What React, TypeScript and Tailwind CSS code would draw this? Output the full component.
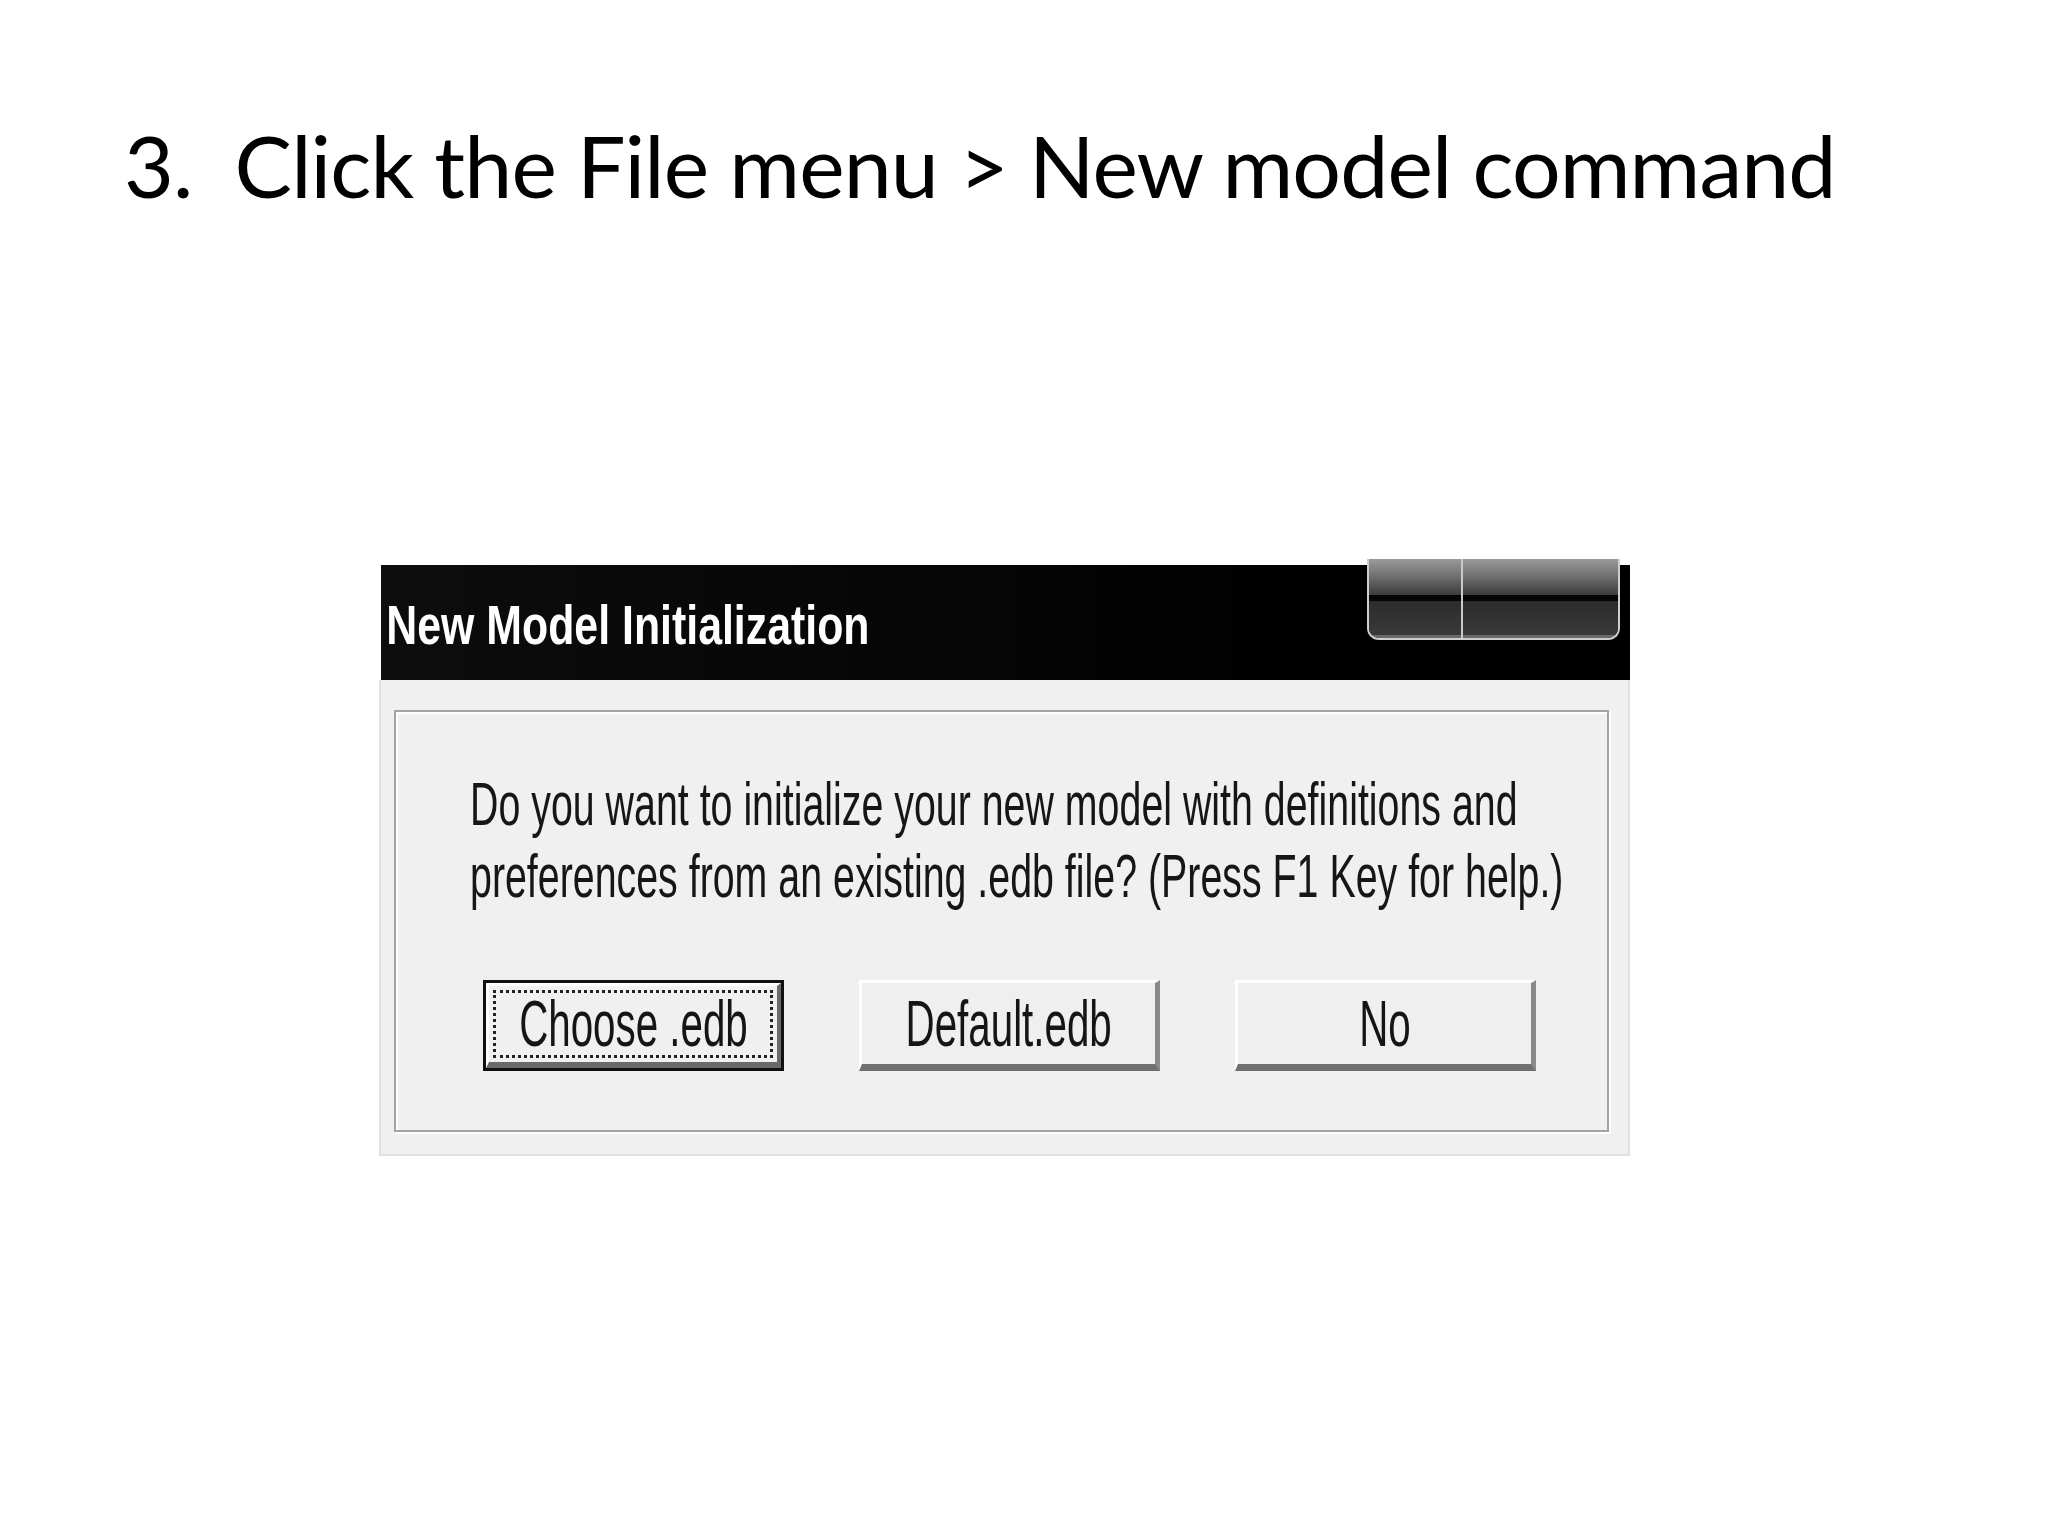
import React from "react";

function CapBtn({ w, border }: { w: string; border?: boolean }) {
  return (
    <div className={`${w} h-full flex flex-col ${border ? "border-r-2 border-[#c9c9c9]" : ""}`}>
      <div className="h-[36px] bg-gradient-to-b from-[#9a9a9a] via-[#6e6e6e] to-[#3c3c3c]" />
      <div className="h-[6px] bg-[#050505]" />
      <div className="flex-1 bg-gradient-to-b from-[#2c2c2c] to-[#3a3a3a] border-b-[3px] border-[#6a6a6a]" />
    </div>
  );
}

function CaptionButtons() {
  return (
    <div className="-mt-[6px] mr-[10px] flex self-start h-[81px] rounded-b-[12px] border-2 border-t-0 border-[#cfcfcf] overflow-hidden bg-black">
      <CapBtn w="w-[94px]" border />
      <CapBtn w="w-[155px]" />
    </div>
  );
}

function DlgButton({ label, isDefault }: { label: string; isDefault?: boolean }) {
  if (isDefault) {
    return (
      <div className="w-[301px] h-[91px] border-[3px] border-[#111] bg-[#f0f0f0]">
        <div className="w-full h-full border-t-[3px] border-l-[3px] border-t-white border-l-white border-b-[6px] border-r-[4px] border-b-[#6a6a6a] border-r-[#6a6a6a] p-[4px]">
          <div className="w-full h-full border-[3px] border-dotted border-[#222] flex items-center justify-center">
            <span className="inline-block scale-x-[0.63] whitespace-nowrap text-[64px] leading-none text-[#151515] font-['Liberation_Sans',Arial,sans-serif]">
              {label}
            </span>
          </div>
        </div>
      </div>
    );
  }
  return (
    <div className="w-[301px] h-[91px] border-t-[3px] border-l-[3px] border-t-white border-l-white border-b-[7px] border-r-[5px] border-b-[#707070] border-r-[#8a8a8a] bg-[#efefef] flex items-center justify-center">
      <span className="inline-block scale-x-[0.63] whitespace-nowrap text-[64px] leading-none text-[#151515] font-['Liberation_Sans',Arial,sans-serif]">
        {label}
      </span>
    </div>
  );
}

export default function App() {
  return (
    <div className="w-[2048px] h-[1536px] bg-white overflow-hidden flex flex-col">
      <h1 className="pl-[124px] pt-[122px] text-[86px] leading-none tracking-[-0.9px] text-black whitespace-pre font-['Lato',sans-serif] font-normal">
        {"3.  Click the File menu > New model command"}
      </h1>

      <div className="ml-[379px] mt-[357px] w-[1251px] flex flex-col">
        {/* Title bar */}
        <div className="h-[115px] ml-[2px] bg-gradient-to-r from-[#0d0d0d] via-[#050505] to-black flex items-center justify-between">
          <span className="pl-[7px] pt-[5px] inline-block origin-left scale-x-[0.765] whitespace-nowrap text-[56px] leading-none font-bold text-white font-['Liberation_Sans',Arial,sans-serif]">
            New Model Initialization
          </span>
          <CaptionButtons />
        </div>

        {/* Body */}
        <div className="h-[476px] bg-[#f0f0f0] border-2 border-t-0 border-[#e2e2e2] pl-[13px] pr-[19px] pt-[30px] pb-[22px] flex">
          <div className="flex-1 min-w-0 border-2 border-[#a3a3a3] shadow-[inset_2px_2px_0_#ffffff,2px_2px_0_#ffffff] pl-[74px] pt-[56px] flex flex-col">
            <div className="text-[61px] leading-[72px] text-[#161616] font-['Liberation_Sans',Arial,sans-serif]">
              <div className="origin-left scale-x-[0.645] whitespace-nowrap">
                Do you want to initialize your new model with definitions and
              </div>
              <div className="origin-left scale-x-[0.645] whitespace-nowrap">
                preferences from an existing .edb file? (Press F1 Key for help.)
              </div>
            </div>
            <div className="mt-[68px] ml-[13px] flex gap-[75px]">
              <DlgButton label="Choose .edb" isDefault />
              <DlgButton label="Default.edb" />
              <DlgButton label="No" />
            </div>
          </div>
        </div>
      </div>
    </div>
  );
}
